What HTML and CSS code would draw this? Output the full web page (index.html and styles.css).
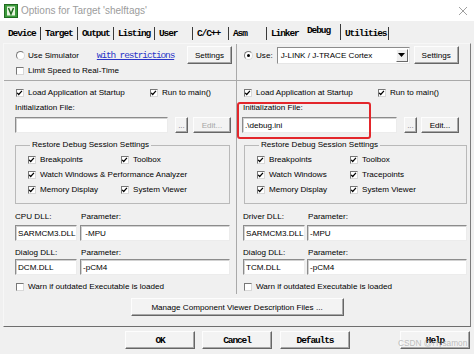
FILE: index.html
```html
<!DOCTYPE html>
<html>
<head>
<meta charset="utf-8">
<title>Options for Target</title>
<link rel="stylesheet" href="styles.css">
</head>
<body>
<div class="titlebar">
  <svg class="appicon" width="14" height="14" viewBox="0 0 14 14">
    <rect x="0.5" y="0.5" width="13" height="13" fill="#3c9a3c" stroke="#1f6b1f"/>
    <rect x="3" y="2.5" width="8" height="9" fill="#e8f5e0"/>
    <path d="M4.5 4 L7 10 L9.5 4" stroke="#1f6b1f" stroke-width="1.5" fill="none"/>
  </svg>
  <span class="title">Options for Target 'shelftags'</span>
  <svg class="close" width="10" height="10" viewBox="0 0 10 10"><path d="M1 1L9 9M9 1L1 9" stroke="#a0a0a0" stroke-width="1"/></svg>
</div>

<div class="tabs">
  <div class="tab">Device</div>
  <div class="tab">Target</div>
  <div class="tab">Output</div>
  <div class="tab">Listing</div>
  <div class="tab">User</div>
  <div class="tab">C/C++</div>
  <div class="tab">Asm</div>
  <div class="tab nosep">Linker</div>
  <div class="tab sel">Debug</div>
  <div class="tab">Utilities</div>
</div>

<div class="page">
  <div class="cols">
    <div class="col col-left">
      <div class="top">
        <div class="row r1">
          <span class="radio"></span><span>Use Simulator</span>
          <span class="link">with restrictions</span>
          <span class="btn settings push">Settings</span>
        </div>
        <div class="row r2"><span class="cb"></span><span>Limit Speed to Real-Time</span></div>
      </div>
      <div class="main">
        <div class="row load">
          <span class="pair first"><span class="cb"><svg viewBox="0 0 8 8"><path d="M1.3 3.8 L3.1 5.7 L6.8 1.6" stroke="#000" stroke-width="1.4" fill="none"/></svg></span>Load Application at Startup</span>
          <span class="pair"><span class="cb"><svg viewBox="0 0 8 8"><path d="M1.3 3.8 L3.1 5.7 L6.8 1.6" stroke="#000" stroke-width="1.4" fill="none"/></svg></span>Run to main()</span>
        </div>
        <div class="row lbl">Initialization File:</div>
        <div class="row init">
          <span class="input init-in"></span>
          <span class="btn dots">...</span>
          <span class="btn edit dis">Edit...</span>
        </div>
        <fieldset class="group">
          <legend>Restore Debug Session Settings</legend>
          <div class="opts">
            <span class="pair"><span class="cb"><svg viewBox="0 0 8 8"><path d="M1.3 3.8 L3.1 5.7 L6.8 1.6" stroke="#000" stroke-width="1.4" fill="none"/></svg></span>Breakpoints</span>
            <span class="pair"><span class="cb"><svg viewBox="0 0 8 8"><path d="M1.3 3.8 L3.1 5.7 L6.8 1.6" stroke="#000" stroke-width="1.4" fill="none"/></svg></span>Toolbox</span>
            <span class="pair wide"><span class="cb"><svg viewBox="0 0 8 8"><path d="M1.3 3.8 L3.1 5.7 L6.8 1.6" stroke="#000" stroke-width="1.4" fill="none"/></svg></span>Watch Windows &amp; Performance Analyzer</span>
            <span class="pair"><span class="cb"><svg viewBox="0 0 8 8"><path d="M1.3 3.8 L3.1 5.7 L6.8 1.6" stroke="#000" stroke-width="1.4" fill="none"/></svg></span>Memory Display</span>
            <span class="pair"><span class="cb"><svg viewBox="0 0 8 8"><path d="M1.3 3.8 L3.1 5.7 L6.8 1.6" stroke="#000" stroke-width="1.4" fill="none"/></svg></span>System Viewer</span>
          </div>
        </fieldset>
        <div class="dll dll-labels first"><span>CPU DLL:</span><span>Parameter:</span></div>
        <div class="dll dll-inputs"><span class="input">SARMCM3.DLL</span><span class="input"> -MPU</span></div>
        <div class="dll dll-labels"><span>Dialog DLL:</span><span>Parameter:</span></div>
        <div class="dll dll-inputs"><span class="input">DCM.DLL</span><span class="input">-pCM4</span></div>
        <div class="row warn"><span class="cb"></span><span>Warn if outdated Executable is loaded</span></div>
      </div>
    </div>

    <div class="col col-right">
      <div class="top">
        <div class="row r1">
          <span class="radio on"></span><span>Use:</span>
          <span class="combo"><span class="combo-text">J-LINK / J-TRACE Cortex</span><span class="combo-btn"><svg width="7" height="4" viewBox="0 0 7 4"><path d="M0 0H7L3.5 4Z" fill="#000"/></svg></span></span>
          <span class="btn settings">Settings</span>
        </div>
      </div>
      <div class="main">
        <div class="row load">
          <span class="pair first"><span class="cb"><svg viewBox="0 0 8 8"><path d="M1.3 3.8 L3.1 5.7 L6.8 1.6" stroke="#000" stroke-width="1.4" fill="none"/></svg></span>Load Application at Startup</span>
          <span class="pair"><span class="cb"><svg viewBox="0 0 8 8"><path d="M1.3 3.8 L3.1 5.7 L6.8 1.6" stroke="#000" stroke-width="1.4" fill="none"/></svg></span>Run to main()</span>
        </div>
        <div class="row lbl">Initialization File:</div>
        <div class="row init">
          <span class="input init-in">.\debug.ini</span>
          <span class="btn dots">...</span>
          <span class="btn edit">Edit...</span>
        </div>
        <fieldset class="group">
          <legend>Restore Debug Session Settings</legend>
          <div class="opts">
            <span class="pair"><span class="cb"><svg viewBox="0 0 8 8"><path d="M1.3 3.8 L3.1 5.7 L6.8 1.6" stroke="#000" stroke-width="1.4" fill="none"/></svg></span>Breakpoints</span>
            <span class="pair"><span class="cb"><svg viewBox="0 0 8 8"><path d="M1.3 3.8 L3.1 5.7 L6.8 1.6" stroke="#000" stroke-width="1.4" fill="none"/></svg></span>Toolbox</span>
            <span class="pair"><span class="cb"><svg viewBox="0 0 8 8"><path d="M1.3 3.8 L3.1 5.7 L6.8 1.6" stroke="#000" stroke-width="1.4" fill="none"/></svg></span>Watch Windows</span>
            <span class="pair"><span class="cb"><svg viewBox="0 0 8 8"><path d="M1.3 3.8 L3.1 5.7 L6.8 1.6" stroke="#000" stroke-width="1.4" fill="none"/></svg></span>Tracepoints</span>
            <span class="pair"><span class="cb"><svg viewBox="0 0 8 8"><path d="M1.3 3.8 L3.1 5.7 L6.8 1.6" stroke="#000" stroke-width="1.4" fill="none"/></svg></span>Memory Display</span>
            <span class="pair"><span class="cb"><svg viewBox="0 0 8 8"><path d="M1.3 3.8 L3.1 5.7 L6.8 1.6" stroke="#000" stroke-width="1.4" fill="none"/></svg></span>System Viewer</span>
          </div>
        </fieldset>
        <div class="dll dll-labels first"><span>Driver DLL:</span><span>Parameter:</span></div>
        <div class="dll dll-inputs"><span class="input">SARMCM3.DLL</span><span class="input">-MPU</span></div>
        <div class="dll dll-labels"><span>Dialog DLL:</span><span>Parameter:</span></div>
        <div class="dll dll-inputs"><span class="input">TCM.DLL</span><span class="input">-pCM4</span></div>
        <div class="row warn"><span class="cb"></span><span>Warn if outdated Executable is loaded</span></div>
      </div>
    </div>
  </div>
  <div class="manage-row">
    <span class="btn manage">Manage Component Viewer Description Files ...</span>
  </div>
</div>

<div class="footer">
  <span class="btn fbtn">OK</span>
  <span class="btn fbtn cancel">Cancel</span>
  <span class="btn fbtn defaults">Defaults</span>
  <span class="btn fbtn help">Help</span>
</div>

<div class="highlight"></div>
<div class="watermark">CSDN @Hysamon</div>
</body>
</html>
```

FILE: styles.css
```css
* { box-sizing: border-box; }
html, body { margin: 0; padding: 0; }
body {
  width: 474px;
  height: 354px;
  overflow: hidden;
  position: relative;
  background: #f0f0f0;
  font-family: "Liberation Sans", Arial, sans-serif;
  font-size: 8.1px;
  color: #000;
}

/* title bar */
.titlebar {
  height: 21px;
  background: #fff;
  display: flex;
  align-items: center;
  padding: 0 6px 0 4px;
}
.appicon { margin-right: 3px; flex: none; }
.title { font-size: 10px; color: #9c9c9c; }
.close { margin-left: auto; }

/* tabs */
.tabs {
  height: 22px;
  padding: 6px 0 0 4px;
  display: grid;
  grid-template-columns: 37px 37px 36px 41px 38px 36px 38px 35px 39px 48px;
  align-items: start;
  font-family: "Liberation Mono", "Courier New", monospace;
  font-weight: bold;
  font-size: 9.5px;
  letter-spacing: -1.1px;
}
.tab {
  height: 13px;
  line-height: 13px;
  padding-left: 4px;
  border-right: 1px solid #3a3a3a;
  white-space: nowrap;
}
.tab.nosep { border-right: 0; }
.tab.sel { margin-top: -3px; height: 16px; padding-left: 5px; }

/* page */
.page {
  margin: 0 3px;
  height: 284px;
  border: 1px solid;
  border-color: #f7f7f7 #7c7c7c #6e6e6e #f7f7f7;
}
.cols {
  height: 250px;
  display: grid;
  grid-template-columns: 233px 233px;
}
.col-left { border-right: 1px solid #a9a9a9; padding: 0 4px 0 11px; }
.col-right { padding: 0 3px 0 6px; }

.top {
  height: 37px;
  padding-top: 2px;
  border-bottom: 1px solid #a9a9a9;
}
.col-left .top { margin: 0 -4px 0 -11px; padding-left: 11px; padding-right: 4px; }
.col-right .top { margin: 0 -3px 0 -6px; padding-left: 6px; padding-right: 3px; }

.row { display: flex; align-items: center; white-space: nowrap; }
.r1 { height: 18px; }
.r2 { height: 13px; }

.main { padding-top: 5px; }
.load { height: 13px; }
.lbl { height: 13px; margin-top: 2px; }
.init { height: 16px; margin-top: 3px; }
.warn { height: 13px; margin-top: 5px; }

.pair { display: inline-flex; align-items: center; white-space: nowrap; }
.pair.first { width: 134px; }

/* checkbox / radio */
.cb {
  width: 8px;
  height: 8px;
  flex: none;
  margin: 0 4px 0 1px;
  background: #fff;
  border: 1px solid;
  border-color: #777 #d8d8d8 #d8d8d8 #777;
  display: inline-flex;
}
.cb svg { width: 8px; height: 8px; margin: -1px 0 0 -1px; }
.radio {
  width: 9px;
  height: 9px;
  flex: none;
  margin: 0 3px 0 1px;
  border-radius: 50%;
  background: #fff;
  border: 1px solid;
  border-color: #7a7a7a #dadada #dadada #7a7a7a;
  position: relative;
}
.radio.on::after {
  content: "";
  position: absolute;
  left: 2px; top: 2px;
  width: 3px; height: 3px;
  border-radius: 50%;
  background: #000;
}

.link {
  margin-left: 18px;
  font-family: "Liberation Mono", "Courier New", monospace;
  font-size: 9.5px;
  letter-spacing: -1.15px;
  color: #2a35c8;
  text-decoration: underline;
}

/* buttons */
.btn {
  display: inline-flex;
  align-items: center;
  justify-content: center;
  height: 18px;
  flex: none;
  background: #f3f3f3;
  border: 1px solid;
  border-color: #fdfdfd #666 #666 #fdfdfd;
  box-shadow: inset -1px -1px 0 #a8a8a8;
  white-space: nowrap;
}
.settings { width: 45px; }
.push { margin-left: auto; }
.col-right .settings { margin-left: 4px; }
.dots { width: 13px; height: 16px; margin-left: 7px; color: #777; }
.edit { width: 38px; height: 16px; margin-left: 5px; }
.col-right .edit { margin-left: 4px; }
.dis { color: #a6a6a6; }

/* inputs */
.input {
  display: flex;
  align-items: center;
  height: 16px;
  padding-left: 2px;
  background: #fff;
  border: 1px solid;
  border-color: #8c8c8c #ececec #ececec #8c8c8c;
  box-shadow: inset 1px 1px 0 #d2d2d2;
  white-space: pre;
  overflow: hidden;
}
.init-in { width: 153px; }
.col-right .init-in { width: 155px; margin-left: -1px; }

/* combo */
.combo {
  display: flex;
  align-items: center;
  width: 133px;
  height: 17px;
  margin-left: 4px;
  background: #fff;
  border: 1px solid;
  border-color: #8c8c8c #e6e6e6 #e6e6e6 #8c8c8c;
  padding: 1px;
}
.combo-text { flex: 1; padding-left: 2px; }
.combo-btn {
  width: 12px;
  height: 13px;
  display: flex;
  align-items: center;
  justify-content: center;
  background: #efefef;
  border: 1px solid;
  border-color: #fdfdfd #6a6a6a #6a6a6a #fdfdfd;
}

/* group */
.group {
  margin: 7px 2px 0 0;
  padding: 3px 4px 7px 11px;
  border: 1px solid #b9b9b9;
  min-width: 0;
}
.col-right .group { margin: 7px 0 0 1px; }
.group legend {
  padding: 0 2px;
  margin-left: 3px;
  height: 10px;
  line-height: 10px;
}
.opts {
  display: grid;
  grid-template-columns: 93px 1fr;
  grid-auto-rows: 13px;
  row-gap: 2px;
}
.pair.wide { grid-column: 1 / 3; }

/* dll */
.dll { display: grid; grid-template-columns: 62px 1fr; column-gap: 3px; }
.col-right .dll { column-gap: 2px; }
.col-left .dll { margin-right: 2px; }
.dll-labels { height: 13px; align-items: center; margin-top: 5px; }
.dll-labels span:last-child { padding-left: 1px; }
.dll-labels.first { margin-top: 6px; }
.dll-inputs { margin-top: 0; }
.dll-labels.first + .dll-inputs { margin-top: 2px; }

/* manage row */
.manage-row {
  height: 32px;
  display: flex;
  justify-content: center;
  padding-top: 4px;
}
.manage { width: 213px; }

/* footer */
.footer {
  display: flex;
  padding: 4px 4px 0 125px;
}
.fbtn {
  width: 70px;
  font-family: "Liberation Mono", "Courier New", monospace;
  font-weight: bold;
  font-size: 9.5px;
  letter-spacing: -1.1px;
}
.cancel { margin-left: 7px; }
.defaults { margin-left: 8px; }
.help { margin-left: auto; }

/* overlays */
.highlight {
  position: absolute;
  left: 237px;
  top: 102px;
  width: 134px;
  height: 37px;
  border: 2px solid #e3262b;
  border-radius: 3px;
}
.watermark {
  position: absolute;
  left: 398px;
  top: 338px;
  font-size: 8.3px;
  white-space: nowrap;
  color: rgba(170, 170, 170, 0.75);
}
```
